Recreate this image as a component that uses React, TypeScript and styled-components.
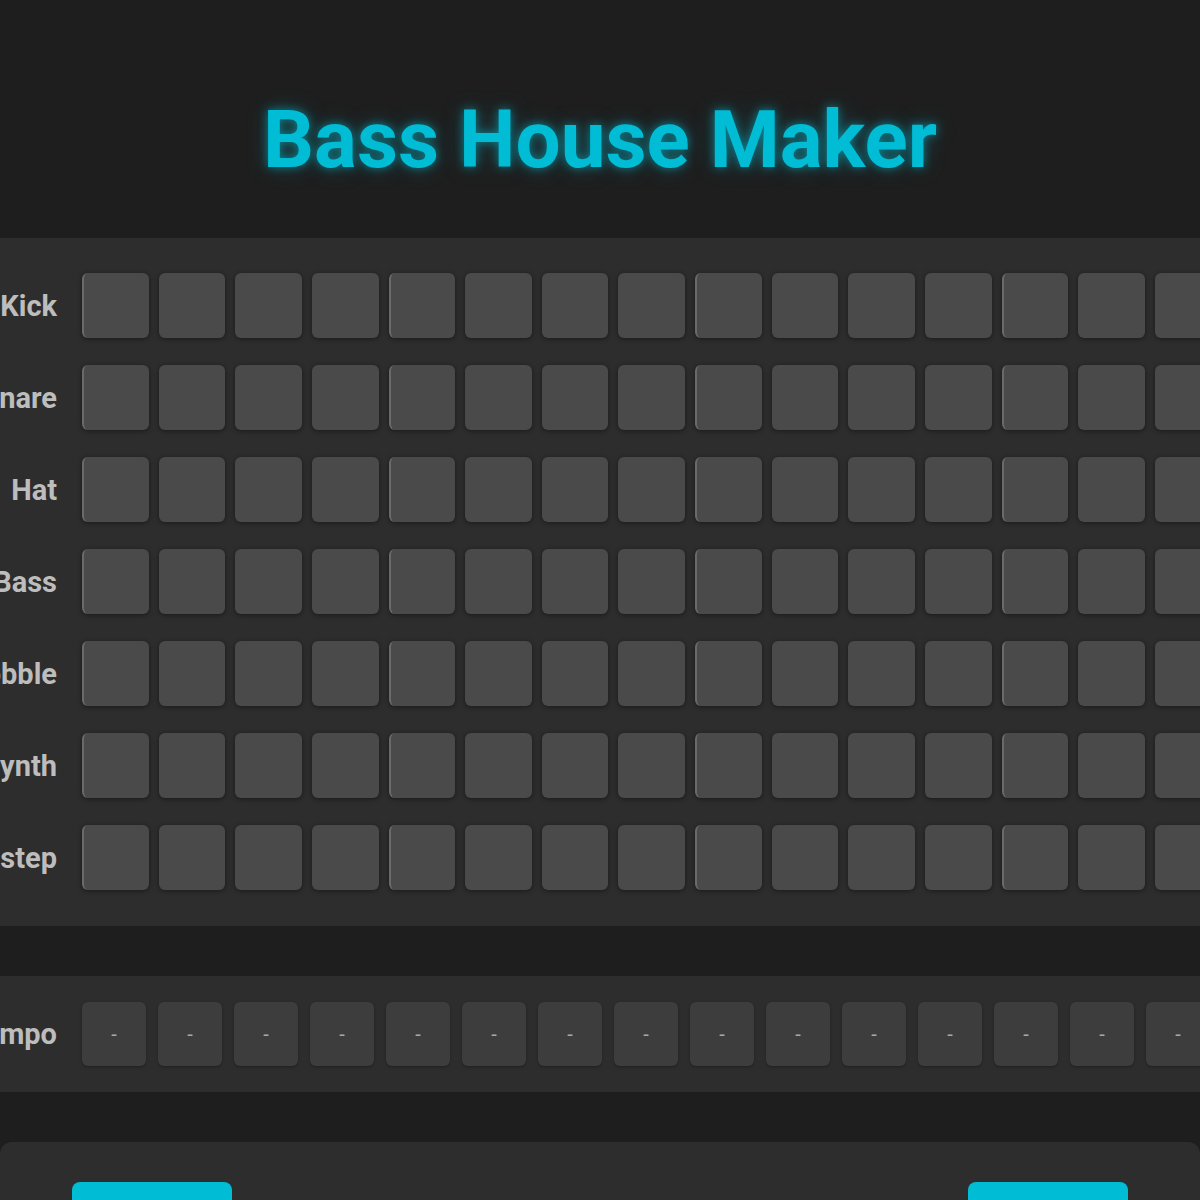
import React from "react"
import styled, { createGlobalStyle, css } from "styled-components"

const GlobalStyle = createGlobalStyle`
  html, body {
    margin: 0;
    padding: 0;
    background: #1e1e1e;
    overflow-x: hidden;
  }
  body {
    font-family: Roboto, "Noto Sans", "Liberation Sans", sans-serif;
    color: #bbbbbb;
  }
`

const Page = styled("div")`
  display: flex;
  flex-direction: column;
  align-items: center;
  width: 100%;
  padding-bottom: 60px;
`

const Header = styled("header")`
  padding: 100px 0 58px;
`

const Title = styled("h1")`
  margin: 0;
  font-size: 80px;
  line-height: 1;
  font-weight: 700;
  color: #00bcd4;
  text-shadow: 0 0 10px rgba(0, 188, 212, 0.6), 0 0 22px rgba(0, 188, 212, 0.25);
`

// sequencer is wider than the window and stays centred, so both ends overflow
const Panel = styled("section")`
  width: 1436px;
  flex-shrink: 0;
  box-sizing: border-box;
  background: #2d2d2d;
  border-radius: 12px;
  padding: 35px 20px 36px;
  display: flex;
  flex-direction: column;
  gap: 27px;
`

const TempoPanel = styled(Panel)`
  margin-top: 50px;
  padding: 26px 20px;
`

const Row = styled("div")`
  display: flex;
  align-items: center;
  gap: 25px;
`

const Label = styled("div")`
  width: 155px;
  flex-shrink: 0;
  text-align: right;
  font-size: 29px;
  font-weight: 700;
  color: #bdbdbd;
  white-space: nowrap;
`

const Steps = styled("div")`
  flex: 1;
  display: grid;
  grid-template-columns: repeat(16, 1fr);
  gap: 10px;
`

const Step = styled("button")<{ $beat: boolean }>`
  height: 65px;
  padding: 0;
  border: none;
  border-radius: 6px;
  background: #4a4a4a;
  box-shadow: 0 1px 5px rgba(0, 0, 0, 0.45);
  cursor: pointer;
  ${(p) =>
    p.$beat &&
    css`
      border-left: 2px solid #6a6a6a;
    `}
`

const TempoSteps = styled("div")`
  display: flex;
  gap: 12px;
`

const TempoStep = styled("div")`
  width: 64px;
  height: 64px;
  flex-shrink: 0;
  display: flex;
  align-items: center;
  justify-content: center;
  border-radius: 6px;
  background: #3d3d3d;
  box-shadow: 0 1px 3px rgba(0, 0, 0, 0.3);
  font-size: 20px;
  color: #a8a8a8;
`

const Controls = styled("section")`
  margin-top: 50px;
  width: 100%;
  box-sizing: border-box;
  background: #2d2d2d;
  border-radius: 12px;
  padding: 40px 72px;
  display: flex;
  justify-content: space-between;
  align-items: center;
`

const ActionButton = styled("button")`
  width: 160px;
  height: 64px;
  border: none;
  border-radius: 8px;
  background: #00bcd4;
  color: #1e1e1e;
  font-family: inherit;
  font-size: 18px;
  font-weight: 700;
  cursor: pointer;
`

const tracks = ["Kick", "Snare", "Hat", "Bass", "Wobble", "Synth", "Dubstep"]
const steps = Array.from({ length: 16 }, (_, i) => i)

const App: React.FC = () => {
  return (
    <>
      <GlobalStyle />
      <Page>
        <Header>
          <Title>Bass House Maker</Title>
        </Header>
        <Panel>
          {tracks.map((name) => (
            <Row key={name}>
              <Label>{name}</Label>
              <Steps>
                {steps.map((i) => (
                  <Step key={i} $beat={i % 4 === 0} />
                ))}
              </Steps>
            </Row>
          ))}
        </Panel>
        <TempoPanel>
          <Row>
            <Label>Tempo</Label>
            <TempoSteps>
              {steps.map((i) => (
                <TempoStep key={i}>-</TempoStep>
              ))}
            </TempoSteps>
          </Row>
        </TempoPanel>
        <Controls>
          <ActionButton>Play</ActionButton>
          <ActionButton>Clear</ActionButton>
        </Controls>
      </Page>
    </>
  )
}

export default App
